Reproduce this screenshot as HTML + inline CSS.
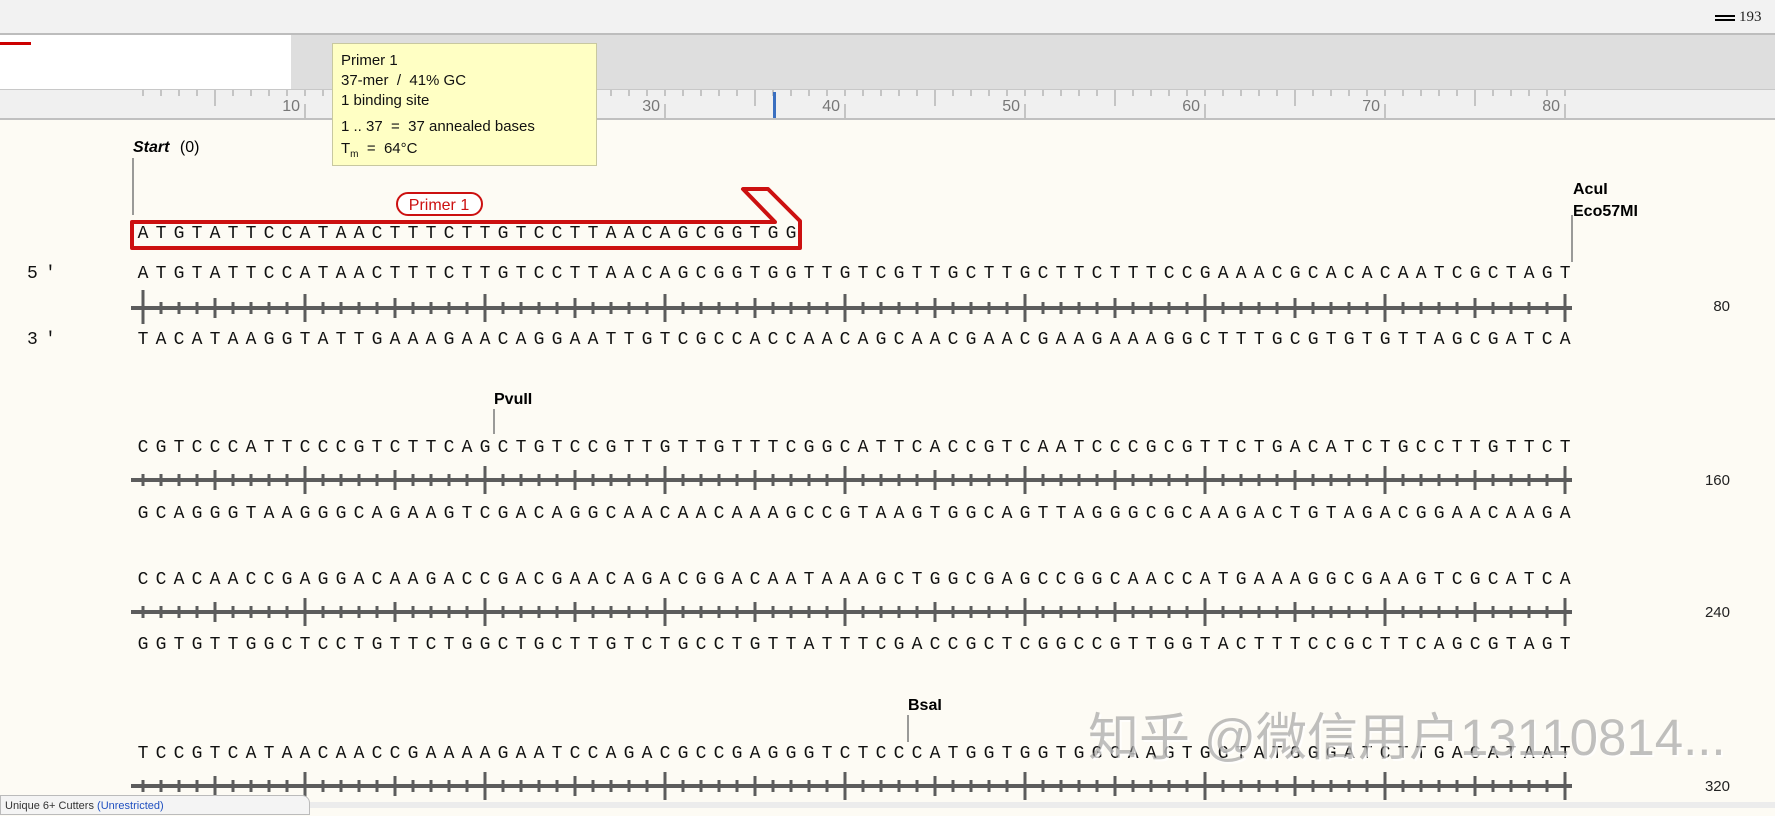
<!DOCTYPE html>
<html><head><meta charset="utf-8"><style>
body{margin:0;width:1775px;height:808px;overflow:hidden;background:#fdfbf4;position:relative;font-family:"Liberation Sans",sans-serif}
.a{position:absolute}
.seq{position:absolute;left:137.6px;font-family:"Liberation Mono",monospace;font-size:18px;letter-spacing:7.2px;line-height:20px;color:#111;white-space:pre}
.lbl{position:absolute;font-size:16px;font-weight:bold;color:#000}
.num{position:absolute;font-size:15px;color:#222;text-align:right;width:60px}
.tt div{line-height:20px}
</style></head><body>
<div class="a" style="left:0;top:0;width:1775px;height:33px;background:#f2f2f2;border-bottom:2px solid #bdbdbd"></div>
<div class="a" style="left:1715px;top:9px;font-size:15px;color:#222;font-family:'Liberation Serif',serif"><span style="display:inline-block;width:20px;height:6px;border-top:2px solid #000;border-bottom:2px solid #000;box-sizing:border-box;vertical-align:middle;margin-right:4px"></span>193</div>
<div class="a" style="left:0;top:35px;width:291px;height:54px;background:#fff"></div>
<div class="a" style="left:0;top:42px;width:31px;height:3px;background:#c00"></div>
<div class="a" style="left:291px;top:35px;width:1484px;height:54px;background:#dedede"></div>
<div class="a" style="left:0;top:89px;width:1775px;height:28px;background:#f0f0f0;border-top:1px solid #c8c8c8;border-bottom:2px solid #c0c0c0"></div>
<svg class="a" style="left:0;top:0" width="1775" height="808">
<defs>
<pattern id="rt" patternUnits="userSpaceOnUse" x="142" y="90" width="18" height="30"><rect x="0" y="0" width="2" height="6" fill="#c4c4c4"/></pattern>
<pattern id="rt5" patternUnits="userSpaceOnUse" x="142" y="90" width="180" height="30"><rect x="72" y="0" width="2" height="16" fill="#c4c4c4"/><rect x="162" y="14" width="2" height="16" fill="#c4c4c4"/></pattern>
<pattern id="s" patternUnits="userSpaceOnUse" x="141.5" y="-20" width="18" height="40"><rect x="0" y="14" width="3" height="12" fill="#5c5c5c"/></pattern>
<pattern id="m" patternUnits="userSpaceOnUse" x="141.5" y="-20" width="180" height="40"><rect x="72" y="10" width="3" height="20" fill="#5c5c5c"/><rect x="162" y="6" width="3" height="28" fill="#5c5c5c"/></pattern>
<g id="rul"><rect x="131" y="-2" width="1441" height="4" fill="#5c5c5c"/><rect x="141.5" y="-20" width="1426" height="40" fill="url(#s)"/><rect x="141.5" y="-20" width="1426" height="40" fill="url(#m)"/></g>
</defs>
<rect x="142" y="90" width="1426" height="10" fill="url(#rt)"/>
<rect x="142" y="90" width="1426" height="28" fill="url(#rt5)"/>
<rect x="773" y="92" width="3" height="26" fill="#3a6fc0"/>
<g font-size="16" fill="#777" text-anchor="end" font-family="Liberation Sans">
<text x="300" y="111">10</text><text x="480" y="111">20</text><text x="660" y="111">30</text><text x="840" y="111">40</text><text x="1020" y="111">50</text><text x="1200" y="111">60</text><text x="1380" y="111">70</text><text x="1560" y="111">80</text></g>
<line x1="133" y1="158" x2="133" y2="215" stroke="#666" stroke-width="1.3"/>
<line x1="1572" y1="215" x2="1572" y2="262" stroke="#666" stroke-width="1.3"/>
<line x1="494" y1="409" x2="494" y2="434" stroke="#666" stroke-width="1.3"/>
<line x1="908" y1="715" x2="908" y2="742" stroke="#666" stroke-width="1.3"/>
<path d="M132 222 H775 L743 189 H768 L800 221 V248 H132 Z" fill="none" stroke="#cc1010" stroke-width="4" stroke-linejoin="round"/>
<rect x="397" y="193" width="85" height="22" rx="11" fill="#fff" stroke="#cc1010" stroke-width="2"/>
<text x="439" y="210" font-size="16" fill="#cc1010" text-anchor="middle">Primer 1</text>
<use href="#rul" y="308"/>
<rect x="141.5" y="290" width="3" height="34" fill="#5c5c5c"/>
<use href="#rul" y="480"/>
<use href="#rul" y="612"/>
<use href="#rul" y="786"/>
</svg>
<div class="lbl" style="left:133px;top:139px;font-style:italic">Start <span style="font-weight:normal;font-style:normal;margin-left:6px">(0)</span></div>
<div class="lbl" style="left:1573px;top:179px;line-height:22px">AcuI<br>Eco57MI</div>
<div class="lbl" style="left:494px;top:391px">PvuII</div>
<div class="lbl" style="left:908px;top:697px">BsaI</div>
<div class="seq" style="top:224px">ATGTATTCCATAACTTTCTTGTCCTTAACAGCGGTGG</div>
<div class="seq" style="left:27px;top:264px">5'</div>
<div class="seq" style="left:27px;top:330px">3'</div>
<div class="seq" style="top:264px">ATGTATTCCATAACTTTCTTGTCCTTAACAGCGGTGGTTGTCGTTGCTTGCTTCTTTCCGAAACGCACACAATCGCTAGT</div>
<div class="seq" style="top:330px">TACATAAGGTATTGAAAGAACAGGAATTGTCGCCACCAACAGCAACGAACGAAGAAAGGCTTTGCGTGTGTTAGCGATCA</div>
<div class="seq" style="top:438px">CGTCCCATTCCCGTCTTCAGCTGTCCGTTGTTGTTTCGGCATTCACCGTCAATCCCGCGTTCTGACATCTGCCTTGTTCT</div>
<div class="seq" style="top:504px">GCAGGGTAAGGGCAGAAGTCGACAGGCAACAACAAAGCCGTAAGTGGCAGTTAGGGCGCAAGACTGTAGACGGAACAAGA</div>
<div class="seq" style="top:570px">CCACAACCGAGGACAAGACCGACGAACAGACGGACAATAAAGCTGGCGAGCCGGCAACCATGAAAGGCGAAGTCGCATCA</div>
<div class="seq" style="top:635px">GGTGTTGGCTCCTGTTCTGGCTGCTTGTCTGCCTGTTATTTCGACCGCTCGGCCGTTGGTACTTTCCGCTTCAGCGTAGT</div>
<div class="seq" style="top:744px">TCCGTCATAACAACCGAAAAGAATCCAGACGCCGAGGGTCTCCCATGGTGGTGGCAAGTGGTATGGGATCTTGACATAAT</div>
<div class="num" style="left:1670px;top:298px">80</div>
<div class="num" style="left:1670px;top:472px">160</div>
<div class="num" style="left:1670px;top:604px">240</div>
<div class="num" style="left:1670px;top:778px">320</div>
<div class="a" style="left:1088px;top:696px;font-size:51px;color:rgba(140,140,140,0.55);font-family:'Liberation Sans','Noto Sans CJK SC',sans-serif;white-space:nowrap;text-shadow:2px 2px 0 rgba(255,255,255,0.7)">知乎 @微信用户13110814...</div>
<div class="a tt" style="left:332px;top:43px;width:265px;height:123px;background:#ffffc4;border:1px solid #c8c8a0;font-size:15px;color:#111;padding:7px 0 0 8px;box-sizing:border-box">
<div>Primer 1</div><div>37-mer &nbsp;/&nbsp; 41% GC</div><div>1 binding site</div><div style="margin-top:6px">1 .. 37 &nbsp;= &nbsp;37 annealed bases</div><div style="margin-top:2px">T<sub style="font-size:10px">m</sub> &nbsp;= &nbsp;64°C</div></div>
<div class="a" style="left:0;top:802px;width:1775px;height:6px;background:#ececec"></div>
<div class="a" style="left:0;top:795px;width:310px;height:20px;background:#f4f4f4;border:1px solid #bbb;border-radius:0 8px 0 0;font-size:11px;color:#333;padding-left:4px;box-sizing:border-box;line-height:20px">Unique 6+ Cutters <span style="color:#2050c0">(Unrestricted)</span></div>
</body></html>
